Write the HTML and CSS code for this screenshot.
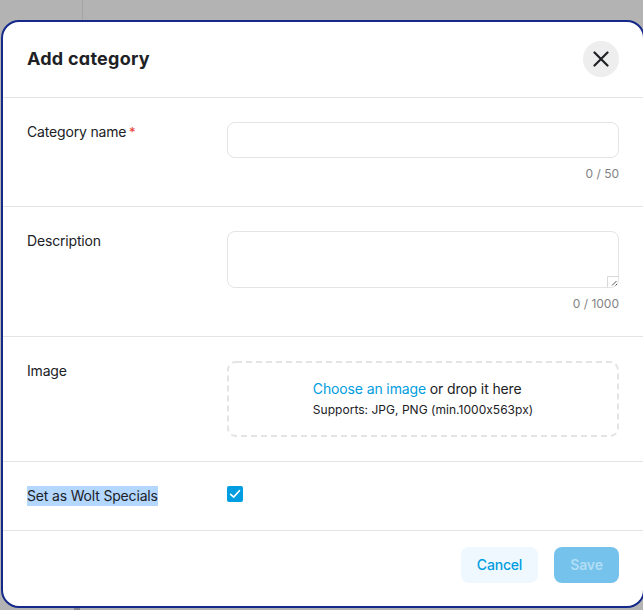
FILE: index.html
```html
<!DOCTYPE html>
<html lang="en">
<head>
<meta charset="utf-8">
<title>Add category</title>
<link rel="stylesheet" href="styles.css">
</head>
<body>
<div class="backdrop">
  <div class="backdrop-top"></div>
  <form class="dialog">
    <header class="header">
      <h1 class="title">Add category</h1>
      <button class="close" type="button" aria-label="Close">
        <svg width="16" height="16" viewBox="0 0 16 16"><path d="M1.5 1.5 14.5 14.5M14.5 1.5 1.5 14.5"/></svg>
      </button>
    </header>
    <section class="row row-name">
      <label class="label" for="name">Category name <span class="required">*</span></label>
      <div class="field">
        <input class="input" id="name" type="text">
        <div class="counter">0 / 50</div>
      </div>
    </section>
    <section class="row row-description">
      <label class="label" for="description">Description</label>
      <div class="field">
        <div class="area-wrap">
          <textarea class="input area" id="description"></textarea>
          <svg class="grip" width="12" height="12" viewBox="0 0 12 12"><path class="grip-edge" d="M.5 11V.5H12"/><path class="grip-lines" d="M5 9.5 9.5 5M8.5 9.5 10 8"/></svg>
        </div>
        <div class="counter">0 / 1000</div>
      </div>
    </section>
    <section class="row row-image">
      <div class="label">Image</div>
      <div class="dropzone">
        <svg class="dash" width="392" height="76"><rect x="1" y="1" width="390" height="74" rx="8"/></svg>
        <div class="drop-text">
          <div class="choose"><a class="link">Choose an image</a> or drop it here</div>
          <div class="hint">Supports: JPG, PNG (min.1000x563px)</div>
        </div>
      </div>
    </section>
    <section class="row row-specials">
      <div class="label"><span class="selected">Set as Wolt Specials</span></div>
      <div class="checkbox" role="checkbox" aria-checked="true">
        <svg width="16" height="16" viewBox="0 0 16 16"><path d="M3.6 8.3 6.7 11.1 12.4 4.7"/></svg>
      </div>
    </section>
    <footer class="footer">
      <button class="button cancel" type="button">Cancel</button>
      <button class="button save" type="button">Save</button>
    </footer>
  </form>
  <div class="backdrop-bottom"></div>
</div>
</body>
</html>
```
FILE: styles.css
```css
* { box-sizing: border-box; }
body {
  margin: 0;
  overflow: hidden;
  font-family: Inter, "Liberation Sans", sans-serif;
  font-size: 14px;
  line-height: 20px;
  color: #202125;
  font-feature-settings: "calt" 0;
}
.backdrop {
  width: 643px;
  height: 610px;
  background: #b3b3b3;
  overflow: hidden;
}
.backdrop-top {
  width: 83px;
  height: 20px;
  border-right: 1px solid #a5a5a6;
}
.backdrop-bottom {
  width: 6px;
  height: 2px;
  margin-left: 74px;
  background: #85858d;
}
.dialog {
  width: 644px;
  height: 588px;
  margin-left: 1px;
  background: #fff;
  border: 2px solid #15298a;
  border-radius: 18px;
}
.header {
  display: flex;
  align-items: center;
  justify-content: space-between;
  height: 76px;
  padding: 0 24px 2px 24px;
  border-bottom: 1px solid #e4e4e5;
}
.title {
  margin: 0;
  font-family: Inter, sans-serif;
  font-size: 18px;
  line-height: 24px;
  font-weight: 700;
  font-feature-settings: "cv11" 1;
  letter-spacing: 0.25px;
}
.close {
  display: flex;
  align-items: center;
  justify-content: center;
  width: 36px;
  height: 36px;
  padding: 0;
  border: 0;
  border-radius: 50%;
  background: #eeeeef;
}
.close path {
  fill: none;
  stroke: #202125;
  stroke-width: 2.2;
  stroke-linecap: round;
}
.row {
  display: grid;
  grid-template-columns: 200px 392px;
  padding: 24px 24px 0 24px;
  border-bottom: 1px solid #e4e4e5;
}
.row-name { height: 109px; }
.row-description { height: 130px; }
.row-image { height: 125px; }
.row-specials { height: 69px; }
.label {
  line-height: 20px;
  letter-spacing: -0.17px;
}
.required {
  margin-left: -1px;
  font-size: 13px;
  color: #e83b32;
}
.input {
  display: block;
  width: 392px;
  height: 36px;
  padding: 8px 12px;
  border: 1px solid #e4e4e5;
  border-radius: 8px;
  background: #fff;
  font: inherit;
  outline: 0;
}
.area-wrap { position: relative; }
.area {
  height: 57px;
  resize: none;
}
.grip {
  position: absolute;
  right: 0;
  bottom: 0;
}
.grip path { fill: none; }
.grip-edge { stroke: #d9d9da; }
.grip-lines { stroke: #555; }
.counter {
  margin-top: 8px;
  font-size: 12px;
  line-height: 16px;
  text-align: right;
  color: #828284;
}
.dropzone {
  position: relative;
  display: flex;
  justify-content: center;
  height: 76px;
  padding-top: 18px;
}
.dash {
  position: absolute;
  inset: 0;
}
.dash rect {
  fill: none;
  stroke: #e4e4e5;
  stroke-width: 2;
  stroke-dasharray: 6 4;
}
.choose { letter-spacing: -0.13px; }
.hint {
  margin-top: 2px;
  font-size: 12px;
  line-height: 18px;
  letter-spacing: 0.03px;
}
.link { color: #009de0; }
.selected {
  display: inline-block;
  background: #b3d7ff;
}
.checkbox {
  width: 16px;
  height: 16px;
  border-radius: 2px;
  background: #009de0;
}
.checkbox svg { display: block; }
.checkbox path {
  fill: none;
  stroke: #fff;
  stroke-width: 1.7;
  stroke-linecap: round;
}
.footer {
  display: flex;
  justify-content: flex-end;
  gap: 16px;
  padding: 16px 24px 0 24px;
}
.button {
  height: 36px;
  padding: 0;
  border: 0;
  border-radius: 8px;
  font: 500 14px/20px Inter, sans-serif;
  letter-spacing: -0.1px;
}
.cancel {
  width: 77px;
  background: #eff8ff;
  color: #009de0;
  letter-spacing: -0.2px;
}
.save {
  width: 65px;
  background: #75c2ec;
  color: #b2def5;
  font-weight: 600;
}
```
